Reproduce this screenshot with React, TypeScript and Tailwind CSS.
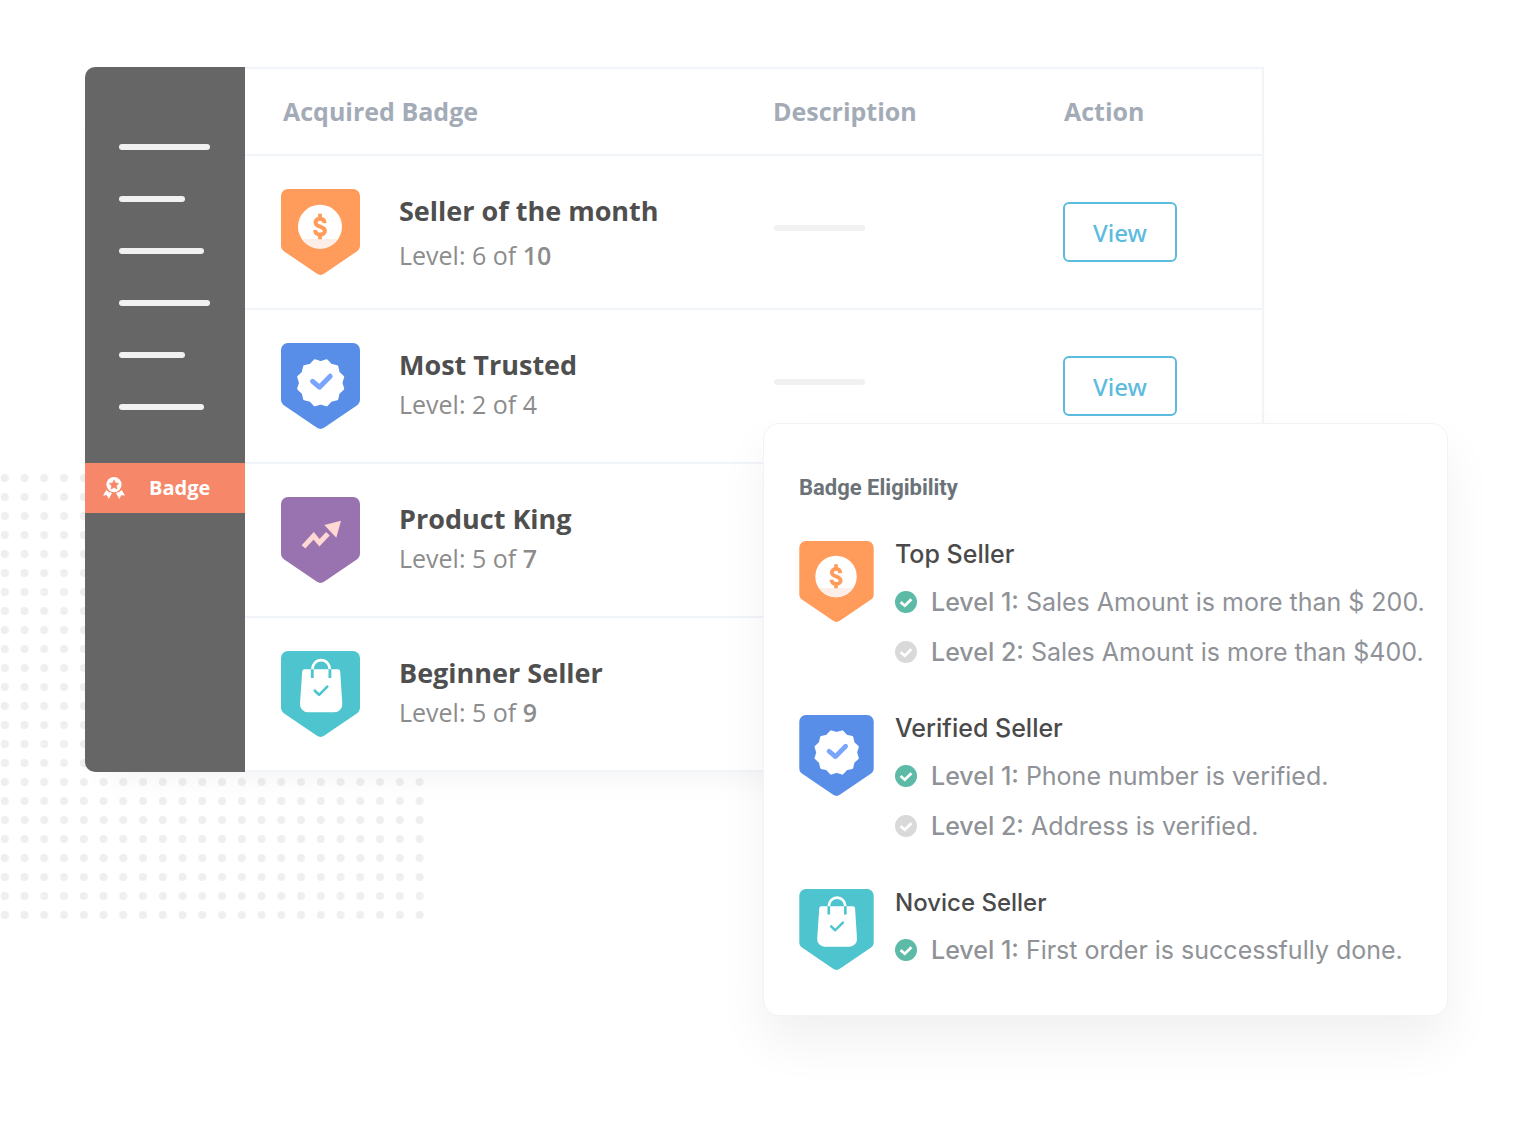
import type { ReactNode } from 'react';

type BadgeKind = 'coin' | 'verified' | 'trend' | 'bag';

interface BadgeRow {
  kind: BadgeKind;
  name: string;
  level: number;
  max: number;
  maxClass: string;
  textClass: string;
}

interface Requirement {
  level: string;
  text: string;
  done: boolean;
}

const shieldColors = {
  coin: '#ff9c5b',
  verified: '#588ee8',
  trend: '#9873b0',
  bag: '#4ec4cf',
};

const acquired: BadgeRow[] = [
  { kind: 'coin', name: 'Seller of the month', level: 6, max: 10, maxClass: 'font-semibold', textClass: 'gap-2 pt-[2px]' },
  { kind: 'verified', name: 'Most Trusted', level: 2, max: 4, maxClass: 'font-normal', textClass: 'gap-[3px] pb-1' },
  { kind: 'trend', name: 'Product King', level: 5, max: 7, maxClass: 'font-semibold', textClass: 'gap-[3px] pb-1' },
  { kind: 'bag', name: 'Beginner Seller', level: 5, max: 9, maxClass: 'font-semibold', textClass: 'gap-[3px] pb-1' },
];

const eligibility: { kind: BadgeKind; name: string; titleClass: string; requirements: Requirement[] }[] = [
  {
    kind: 'coin',
    name: 'Top Seller',
    titleClass: 'text-[25px]',
    requirements: [
      { level: 'Level 1:', text: 'Sales Amount is more than $ 200.', done: true },
      { level: 'Level 2:', text: 'Sales Amount is more than $400.', done: false },
    ],
  },
  {
    kind: 'verified',
    name: 'Verified Seller',
    titleClass: 'text-[25px]',
    requirements: [
      { level: 'Level 1:', text: 'Phone number is verified.', done: true },
      { level: 'Level 2:', text: 'Address is verified.', done: false },
    ],
  },
  {
    kind: 'bag',
    name: 'Novice Seller',
    titleClass: 'text-[24px]',
    requirements: [{ level: 'Level 1:', text: 'First order is successfully done.', done: true }],
  },
];

const menuBars = ['w-[91px]', 'w-[66px]', 'w-[85px]', 'w-[91px]', 'w-[66px]', 'w-[85px]'];

// 12 rounded teeth around the centre of the seal
const sealPoints = Array.from({ length: 24 }, (_, i) => {
  const r = i % 2 === 0 ? 20.4 : 23;
  const a = (i * 15 * Math.PI) / 180;
  return `${(39.7 + r * Math.sin(a)).toFixed(2)},${(39.8 - r * Math.cos(a)).toFixed(2)}`;
}).join(' ');

const glyphs: Record<BadgeKind, ReactNode> = {
  coin: (
    <>
      <circle cx="39" cy="37.7" r="22" fill="#fff" />
      <path d="M20.8 50h36.4a22 22 0 0 1-36.4 0z" fill="#fdefe8" />
      <path d="M39 24.8v4M39 46v4.2" stroke="#ff9c5b" strokeWidth="3.8" />
      <path d="M43.6 34.2c-.2-3-1.900-4.500-4.600-4.500-2.600 0-4.500 1.400-4.500 3.700 0 5.200 9.400 3.400 9.400 8.500 0 2.300-2 3.700-4.800 3.700s-4.800-1.600-4.900-4.600" stroke="#ff9c5b" strokeWidth="4" fill="none" />
    </>
  ),
  verified: (
    <>
      <polygon points={sealPoints} fill="#fff" stroke="#fff" strokeWidth="2.6" strokeLinejoin="round" />
      <path d="M31.6 38.4l6.8 5.8 10.8-11" stroke="#7ba4ff" strokeWidth="5" fill="none" strokeLinecap="round" strokeLinejoin="round" />
    </>
  ),
  trend: (
    <>
      <path d="M22.5 49.9l10.2-11 5.8 6.9 8.4-9" stroke="#ffd8d3" strokeWidth="5" fill="none" />
      <path d="M43.3 28L60 23.7 55.3 40.7z" fill="#ffd8d3" />
    </>
  ),
  bag: (
    <>
      <path d="M23.6 18.3h33.2a2.4 2.4 0 0 1 2.4 2.2l2.1 32.3a8 8 0 0 1-8 8.5H27a8 8 0 0 1-8-8.5l2.2-32.3a2.4 2.4 0 0 1 2.4-2.2z" fill="#fff" />
      <path d="M31.3 18.4a8.8 9.2 0 0 1 17.6 0" stroke="#fff" strokeWidth="2.8" fill="none" />
      <path d="M31.3 18.2V27M48.9 18.2V27" stroke="#4ec4cf" strokeWidth="2.8" />
      <path d="M33.8 39.7l4.3 4.1 8.2-8.2" stroke="#4ec4cf" strokeWidth="2.6" fill="none" strokeLinecap="round" strokeLinejoin="round" />
    </>
  ),
};

function Shield({ kind, className }: { kind: BadgeKind; className: string }) {
  return (
    <svg className={`shrink-0 ${className}`} viewBox="0 0 79 86" fill="none" aria-hidden="true">
      <path d="M7 0h65a7 7 0 0 1 7 7v49.5a7 7 0 0 1-3.2 5.9L43 84.8a6.4 6.4 0 0 1-7 0L3.2 62.4A7 7 0 0 1 0 56.5V7a7 7 0 0 1 7-7z" fill={shieldColors[kind]} />
      {glyphs[kind]}
    </svg>
  );
}

function CheckDot({ done }: { done: boolean }) {
  return (
    <svg className="w-[22px] h-[22px] shrink-0" viewBox="0 0 22 22" fill="none" role="img" aria-label={done ? 'Completed' : 'Not completed'}>
      <circle cx="11" cy="11" r="11" fill={done ? '#5cbaa6' : '#d9d9d9'} />
      <path d="M5.6 11.100l4.200 3.600 6.600-6.500" stroke="#fff" strokeWidth="2.700" />
    </svg>
  );
}

function RibbonIcon() {
  return (
    <svg className="w-[22px] h-[22px] shrink-0" viewBox="0 0 22 22" fill="none" aria-hidden="true">
      <circle cx="11" cy="7.6" r="7.6" fill="#fff" />
      <path d="M11 2.900l1.500 3 3.300.500-2.400 2.300.600 3.300-3-1.600-3 1.600.600-3.300-2.400-2.300 3.300-.500z" fill="#f68768" stroke="#f68768" strokeWidth=".6" strokeLinejoin="round" />
      <path d="M3.300 13L0 18.600l3.800-.3 2 3.700 3.200-6A10 10 0 0 1 3.300 13zM18.700 13l3.300 5.600-3.800-.3-2 3.700-3.200-6a10 10 0 0 0 5.700-3z" fill="#fff" />
    </svg>
  );
}

function DotGrid() {
  return (
    <svg className="absolute left-0 top-[468px] w-[430px] h-[456px]" aria-hidden="true">
      <defs>
        <pattern id="dots" width="19.75" height="19" x="-5" y="0" patternUnits="userSpaceOnUse">
          <circle cx="9.8" cy="10" r="4" fill="#efefef" />
        </pattern>
      </defs>
      <rect width="430" height="456" fill="url(#dots)" />
    </svg>
  );
}

function Sidebar() {
  return (
    <nav className="w-[160px] shrink-0 bg-[#666666] rounded-l-[10px]">
      <div className="flex flex-col gap-[46px] pl-[34px] pt-[77px] pb-[53px]">
        {menuBars.map((width, i) => (
          <div key={i} className={`h-[6px] rounded-full bg-[#f1f1f1] ${width}`}></div>
        ))}
      </div>
      <a href="#badge" className="flex items-center gap-6 h-[50px] pl-[18px] bg-[#f68768] text-white text-[20px] font-bold">
        <RibbonIcon />
        Badge
      </a>
    </nav>
  );
}

function BadgeTable() {
  return (
    <table className="flex-1 table-fixed border-separate border-spacing-0 border-t-2 border-r-2 border-[#f1f5fa] bg-white text-left">
      <thead>
        <tr className="h-[87px] text-[25px] leading-8 text-[#a3abb7]">
          <th className="w-[490px] pl-[38px] pb-[2px] font-bold border-b-2 border-[#f1f5fa]">Acquired Badge</th>
          <th className="w-[291px] pl-[38px] pb-[2px] font-bold border-b-2 border-[#f1f5fa]">Description</th>
          <th className="pl-[38px] pb-[2px] font-bold border-b-2 border-[#f1f5fa]">Action</th>
        </tr>
      </thead>
      <tbody>
        {acquired.map(row => (
          <tr key={row.name} className="h-[154px]">
            <td className="pl-9 border-b-2 border-[#f1f5fa]">
              <div className="flex items-center gap-[39px]">
                <Shield kind={row.kind} className="w-[79px] h-[86px]" />
                <div className={`flex flex-col ${row.textClass}`}>
                  <p className="text-[27px] leading-9 font-bold text-[#4f4f4f]">{row.name}</p>
                  <p className="text-[25px] leading-9 text-[#8c8c8c]">
                    Level: {row.level} of <span className={row.maxClass}>{row.max}</span>
                  </p>
                </div>
              </div>
            </td>
            <td className="pl-[39px] pb-2 border-b-2 border-[#f1f5fa]">
              <div className="w-[91px] h-[6px] rounded-[3px] bg-[#f1f1f1]"></div>
            </td>
            <td className="pl-[37px] border-b-2 border-[#f1f5fa]">
              <button className="block w-[114px] h-[60px] pt-[2px] border-2 border-[#5dbbe0] rounded-[6px] font-['Noto_Sans',sans-serif] text-[24px] font-medium text-[#5dbbe0]">View</button>
            </td>
          </tr>
        ))}
      </tbody>
    </table>
  );
}

function EligibilityCard() {
  return (
    <section className="absolute top-[423px] right-[88px] w-[685px] pt-12 pb-10 pl-[35px] bg-white border border-[#f3f3f3] rounded-[16px] shadow-[0_26px_50px_0_rgba(0,0,0,0.06)] font-['Inter',sans-serif]">
      <h2 className="font-['Roboto',sans-serif] text-[22px] leading-8 font-bold text-[#6b7378]">Badge Eligibility</h2>
      <div className="flex flex-col gap-[29px] mt-7">
        {eligibility.map(item => (
          <div key={item.name} className="flex gap-[21px]">
            <Shield kind={item.kind} className="w-[75px] h-[81px] mt-[9px]" />
            <div>
              <h3 className={`leading-[45px] font-medium text-[#4a4a4a] ${item.titleClass}`}>{item.name}</h3>
              <ul>
                {item.requirements.map(req => (
                  <li key={req.level} className="flex items-center gap-[14px] text-[25px] leading-[50px] text-[#8f9297] whitespace-nowrap">
                    <CheckDot done={req.done} />
                    <span><span className="font-medium">{req.level}</span> {req.text}</span>
                  </li>
                ))}
              </ul>
            </div>
          </div>
        ))}
      </div>
    </section>
  );
}

export default function App() {
  return (
    <div className="relative min-h-screen overflow-hidden bg-white pt-[67px] pl-[85px] pr-[272px] font-['Open_Sans',sans-serif]">
      <DotGrid />
      <main className="relative flex rounded-l-[10px] shadow-[0_24px_30px_-20px_rgba(0,0,0,0.05)]">
        <Sidebar />
        <BadgeTable />
      </main>
      <EligibilityCard />
    </div>
  );
}
